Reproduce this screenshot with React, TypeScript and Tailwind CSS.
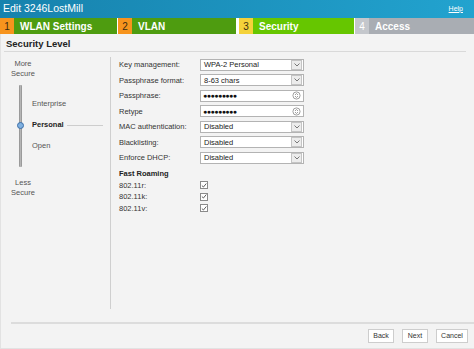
import React from 'react';

const font = { fontFamily: '"Liberation Sans", Arial, sans-serif' };

const Chevron: React.FC = () => (
  <span className="flex h-[10px] w-[11px] items-center justify-center border border-[#c4c4c4] bg-[#ececec]">
    <svg width="6" height="4" viewBox="0 0 6 4">
      <path d="M0.5 0.5 L3 3 L5.5 0.5" fill="none" stroke="#777" strokeWidth="1" />
    </svg>
  </span>
);

const Reveal: React.FC = () => (
  <svg width="9" height="9" viewBox="0 0 9 9">
    <circle cx="4.5" cy="4.5" r="3.6" fill="none" stroke="#888" strokeWidth="0.8" />
    <path d="M3 4 L4.5 2.5 L6 4 M3 5 L4.5 6.5 L6 5" fill="none" stroke="#888" strokeWidth="0.8" />
  </svg>
);

const Select: React.FC<{ value: string }> = ({ value }) => (
  <div className="flex h-[12px] w-[104px] items-center justify-between border border-[#b3b3b3] bg-white pl-[3px] pr-[1px] text-[7.5px] text-[#222]">
    <span>{value}</span>
    <Chevron />
  </div>
);

const Password: React.FC = () => (
  <div className="flex h-[12px] w-[104px] items-center justify-between border border-[#b3b3b3] bg-white pl-[2px] pr-[2px] text-[#111]">
    <span className="text-[7px] font-bold leading-none tracking-[-0.5px]">●●●●●●●●●</span>
    <Reveal />
  </div>
);

const Check: React.FC = () => (
  <span className="flex h-[8px] w-[8px] items-center justify-center border border-[#8a8a8a] bg-white">
    <svg width="7" height="7" viewBox="0 0 7 7">
      <path d="M1 3.5 L2.8 5.3 L6.2 1.2" fill="none" stroke="#444" strokeWidth="1" />
    </svg>
  </span>
);

const Row: React.FC<{ label: string; children: React.ReactNode }> = ({ label, children }) => (
  <div className="flex h-[15.5px] items-center">
    <span className="w-[81px] text-[7.5px] text-[#333]">{label}</span>
    {children}
  </div>
);

const CheckRow: React.FC<{ label: string }> = ({ label }) => (
  <div className="flex h-[11.5px] items-center">
    <span className="w-[81px] text-[7.5px] text-[#333]">{label}</span>
    <Check />
  </div>
);

const Tab: React.FC<{ num: string; label: string; numBg: string; bg: string; width: string; numText: string; text: string }> = ({
  num,
  label,
  numBg,
  bg,
  width,
  numText,
  text,
}) => (
  <div className={`flex h-full ${width}`}>
    <span className={`flex w-[14px] items-center justify-center text-[10px] ${numBg} ${numText}`}>{num}</span>
    <span className={`flex flex-1 items-center pl-[6px] text-[10px] font-bold ${bg} ${text}`}>{label}</span>
  </div>
);

export default function App() {
  return (
    <div className="flex h-[349px] w-[474px] flex-col overflow-hidden bg-white" style={font}>
      <header className="flex h-[18px] items-center justify-between bg-gradient-to-r from-[#1782ad] to-[#22a3cf] px-[3px]">
        <span className="text-[10.5px] text-white">Edit 3246LostMill</span>
        <span className="mr-[8px] text-[7px] text-white underline">Help</span>
      </header>

      <nav className="flex h-[16px] gap-[1px] bg-white">
        <Tab num="1" label="WLAN Settings" numBg="bg-[#f7941d]" bg="bg-[#4e9c10]" width="w-[117px]" numText="text-[#3a2a10]" text="text-white" />
        <Tab num="2" label="VLAN" numBg="bg-[#f7941d]" bg="bg-[#4e9c10]" width="w-[118px]" numText="text-[#3a2a10]" text="text-white" />
        <div className="w-[1px]" />
        <Tab num="3" label="Security" numBg="bg-[#f4d23a]" bg="bg-[#66c600]" width="w-[115px]" numText="text-[#3a3010]" text="text-white" />
        <Tab num="4" label="Access" numBg="bg-[#c4c7cc]" bg="bg-[#a9adb3]" width="w-[119px]" numText="text-white" text="text-white" />
      </nav>

      <main className="flex flex-1 flex-col border-b border-l border-[#e2e2e2] bg-[#f3f3f3]">
        <div className="mx-[3px] flex h-[18px] w-[462px] items-center border-b border-[#d9d9d9] pl-[2px] pt-[3px] text-[9.5px] font-bold text-[#222]">
          Security Level
        </div>

        <div className="mt-[5px] flex h-[252px]">
          <aside className="flex w-[110px] flex-col border-r border-[#cfcfcf] pt-[2px] text-[7.5px] text-[#555]">
            <div className="w-[44px] text-center leading-[10px]">
              More
              <br />
              Secure
            </div>
            <div className="ml-[18px] mt-[6px] flex">
              <div className="relative h-[82px] w-[3px] rounded-[1px] bg-gradient-to-r from-[#8d8d8d] via-[#b5b5b5] to-[#8d8d8d]">
                <span className="absolute left-[-2px] top-[37px] h-[7px] w-[7px] rounded-full border border-[#3d6fa8] bg-[#7fb0e0]" />
              </div>
              <div className="ml-[10px] flex w-[71px] flex-col pt-[8.5px]">
                <div className="flex h-[21px] items-center">Enterprise</div>
                <div className="flex h-[21px] items-center">
                  <span className="font-bold text-[#222]">Personal</span>
                  <span className="ml-[3px] h-px flex-1 bg-[#cdcdcd]" />
                </div>
                <div className="flex h-[21px] items-center">Open</div>
              </div>
            </div>
            <div className="mt-[11px] w-[44px] text-center leading-[10px]">
              Less
              <br />
              Secure
            </div>
          </aside>

          <section className="flex flex-col pl-[8px]">
            <Row label="Key management:">
              <Select value="WPA-2 Personal" />
            </Row>
            <Row label="Passphrase format:">
              <Select value="8-63 chars" />
            </Row>
            <Row label="Passphrase:">
              <Password />
            </Row>
            <Row label="Retype">
              <Password />
            </Row>
            <Row label="MAC authentication:">
              <Select value="Disabled" />
            </Row>
            <Row label="Blacklisting:">
              <Select value="Disabled" />
            </Row>
            <Row label="Enforce DHCP:">
              <Select value="Disabled" />
            </Row>
            <div className="flex h-[14px] items-end text-[7.5px] font-bold text-[#222]">Fast Roaming</div>
            <CheckRow label="802.11r:" />
            <CheckRow label="802.11k:" />
            <CheckRow label="802.11v:" />
          </section>
        </div>

        <div className="ml-[10px] mt-[13px] h-[2px] bg-[#dcdcdc]" />

        <div className="mt-[5px] flex justify-end gap-[8px] pr-[6px] text-[7px] text-[#333]">
          <button className="h-[14px] w-[26px] border border-[#cdcdcd] bg-white">Back</button>
          <button className="h-[14px] w-[26px] border border-[#cdcdcd] bg-white">Next</button>
          <button className="h-[14px] w-[32px] border border-[#cdcdcd] bg-white">Cancel</button>
        </div>
      </main>
    </div>
  );
}
